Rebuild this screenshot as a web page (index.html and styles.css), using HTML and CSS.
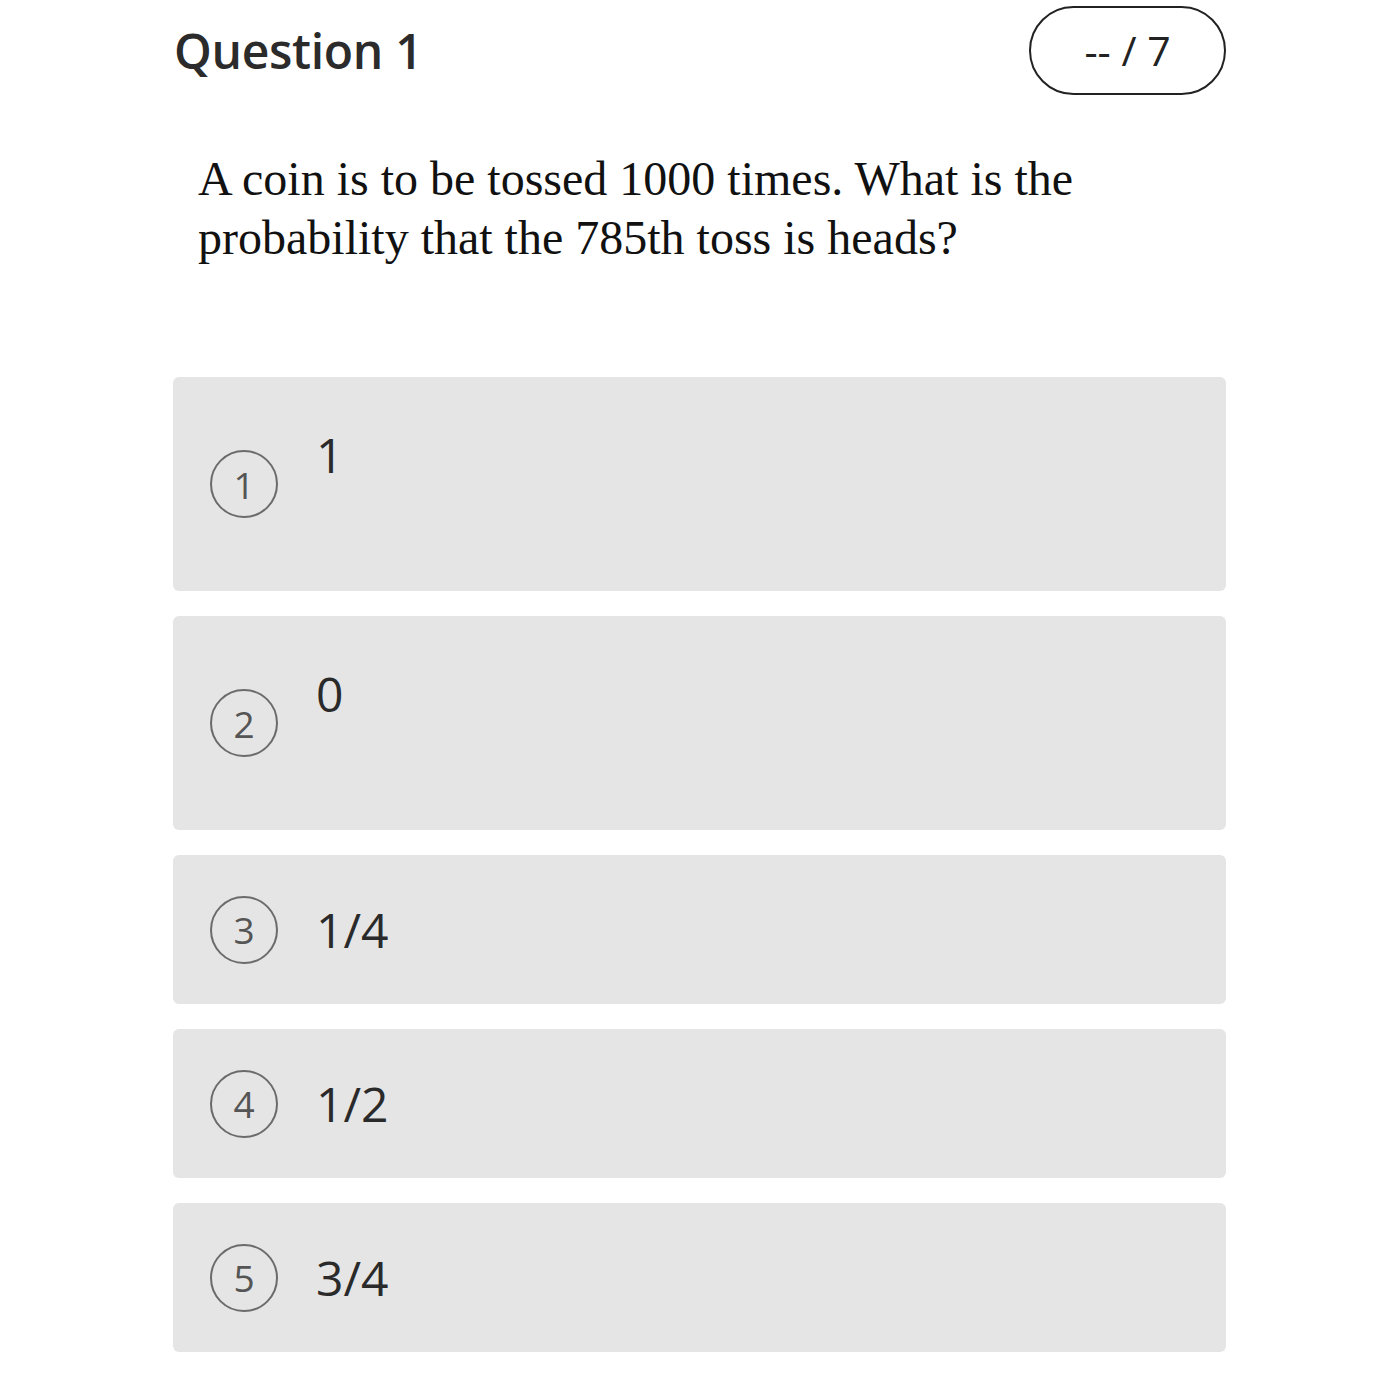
FILE: index.html
```html
<!DOCTYPE html>
<html>
<head>
<meta charset="utf-8">
<link rel="stylesheet" href="styles.css">
</head>
<body>
<div class="page">
  <div class="header">
    <h1 class="title">Question 1</h1>
    <div class="score">-- / 7</div>
  </div>
  <p class="question">A coin is to be tossed 1000 times. What is the<br>probability that the 785th toss is heads?</p>
  <div class="answers">
    <div class="card"><span class="num">1</span><div class="ans tall">1</div></div>
    <div class="card"><span class="num">2</span><div class="ans tall">0</div></div>
    <div class="card"><span class="num">3</span><div class="ans">1/4</div></div>
    <div class="card"><span class="num">4</span><div class="ans">1/2</div></div>
    <div class="card"><span class="num">5</span><div class="ans">3/4</div></div>
  </div>
</div>
</body>
</html>
```
FILE: styles.css
```css
html, body {
  margin: 0;
  padding: 0;
  background: #ffffff;
}
.page {
  margin-left: 173px;
  width: 1053px;
  padding-top: 6px;
  font-family: "Open Sans", sans-serif;
  color: #262626;
}
.header {
  display: flex;
  justify-content: space-between;
  align-items: center;
  height: 88px;
}
.title {
  margin: 0 0 0 1px;
  font-size: 48px;
  font-weight: 600;
  color: #2b2b2b;
  letter-spacing: -0.3px;
}
.score {
  box-sizing: border-box;
  width: 197px;
  height: 89px;
  border: 2.5px solid #222;
  border-radius: 45px;
  display: flex;
  align-items: center;
  justify-content: center;
  font-size: 41px;
  color: #222;
}
.question {
  margin: 55px 0 0 25px;
  font-family: "Liberation Serif", "Times New Roman", serif;
  font-size: 48px;
  line-height: 59px;
  color: #111;
}
.answers {
  margin-top: 110px;
  display: flex;
  flex-direction: column;
  gap: 25px;
}
.card {
  background: #e5e5e5;
  border-radius: 6px;
  display: flex;
  align-items: center;
  padding: 40px 37px;
}
.num {
  box-sizing: border-box;
  width: 68px;
  height: 68px;
  border: 2.5px solid #6b6b6b;
  border-radius: 50%;
  display: flex;
  align-items: center;
  justify-content: center;
  font-size: 37px;
  font-weight: 500;
  color: #555;
  flex: none;
}
.ans {
  margin-left: 38px;
  font-size: 48px;
  line-height: 69px;
  color: #2a2a2a;
}
.ans.tall {
  align-self: flex-start;
  margin-top: 3px;
  padding-bottom: 62px;
}
```
